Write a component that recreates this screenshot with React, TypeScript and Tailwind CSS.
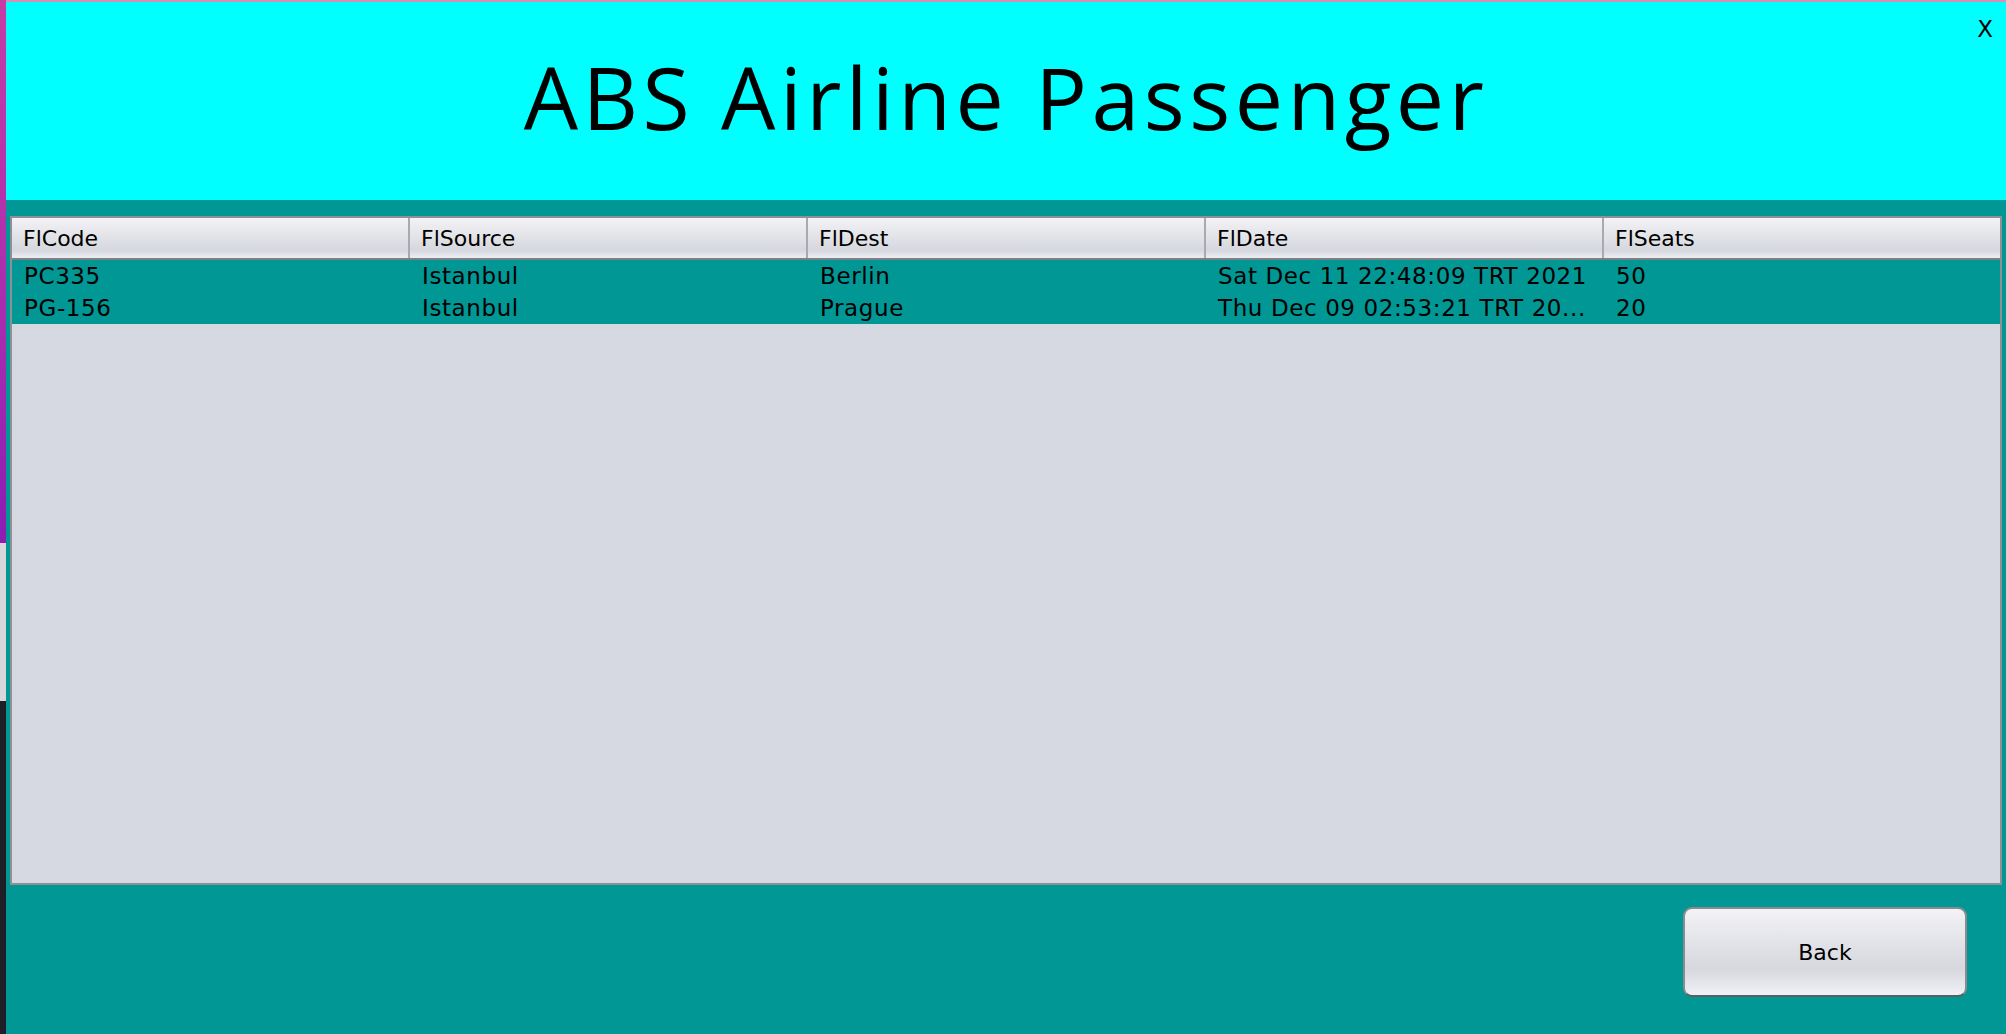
const columns = ["FlCode", "FlSource", "FlDest", "FlDate", "FlSeats"];

const flights = [
  ["PC335", "Istanbul", "Berlin", "Sat Dec 11 22:48:09 TRT 2021", "50"],
  ["PG-156", "Istanbul", "Prague", "Thu Dec 09 02:53:21 TRT 20...", "20"],
];

export default function App() {
  return (
    <div className="flex w-[2006px] h-[1034px] overflow-hidden bg-[#009795] font-['DejaVu_Sans',sans-serif] text-black">
      {/* desktop peeking out on the left */}
      <div className="flex flex-col w-[6px] shrink-0">
        <div className="h-[543px] bg-[linear-gradient(to_bottom,#c63ca6,#a82cb0_60%,#8c1cb4)]" />
        <div className="h-[158px] bg-[#d9d6dc]" />
        <div className="flex-1 bg-[#1e1f26]" />
      </div>

      <div className="flex flex-col flex-1">
        <div className="h-[2px] bg-[#d78fb8]" />

        <header className="relative flex items-center justify-center h-[198px] bg-[#00ffff]">
          <h1 className="font-['Open_Sans',sans-serif] font-normal text-[86px] leading-none tracking-[4.5px] pb-[8px]">
            ABS Airline Passenger
          </h1>
          <span className="absolute right-[13px] top-[16px] text-[23px] leading-none">X</span>
        </header>

        <main className="flex flex-col flex-1 pt-[16px] pl-[4px] pr-[4px]">
          <div className="flex flex-col h-[669px] border-2 border-[#8f9094] bg-[#d6d9e1]">
            <div className="flex h-[42px] border-b-2 border-[#7f8084] bg-[linear-gradient(to_bottom,#f3f3f6,#dcdde2_65%,#d5d7de_80%,#eceef4)]">
              {columns.map((c, i) => (
                <div
                  key={c}
                  className={`flex-1 flex items-center pl-[11px] text-[22px] ${i > 0 ? "border-l-2 border-[#a9aaae]" : ""}`}
                >
                  {c}
                </div>
              ))}
            </div>
            {flights.map((row) => (
              <div key={row[0]} className="flex h-[32px] bg-[#009795]">
                {row.map((cell, i) => (
                  <div
                    key={i}
                    className={`flex-1 flex items-center pl-[12px] text-[23px] tracking-[0.6px] whitespace-nowrap overflow-hidden ${i > 0 ? "ml-[2px]" : ""}`}
                  >
                    {cell}
                  </div>
                ))}
              </div>
            ))}
          </div>

          <div className="flex justify-end pt-[22px] pr-[35px]">
            <button className="w-[284px] h-[90px] rounded-[9px] border-2 border-[#8a8b90] border-b-[#5d5e62] bg-[linear-gradient(to_bottom,#f3f3f6,#e0e1e6_45%,#d6d8de_70%,#f1f2f8)] text-[22px]">
              Back
            </button>
          </div>
        </main>
      </div>
    </div>
  );
}
